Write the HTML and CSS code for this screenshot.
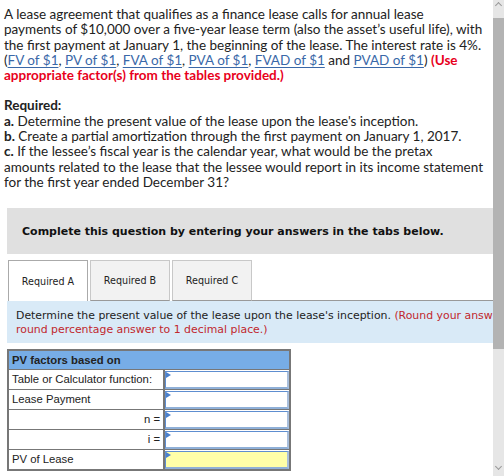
FILE: index.html
```html
<!DOCTYPE html>
<html lang="en">

<head>
  <meta charset="UTF-8" />
  <meta name="viewport" content="width=device-width, initial-scale=1.0" />
  <title>Lease question</title>
  <link rel="stylesheet" href="styles.css">
</head>

<body>
  <div class="page">
    <div class="main">
      <div class="question">
        <p>
          A lease agreement that qualifies as a finance lease calls for annual lease<br>
          payments of $10,000 over a five-year lease term (also the asset’s useful life), with<br>
          the first payment at January 1, the beginning of the lease. The interest rate is 4%.<br>
          (<a href="#">FV of $1</a>, <a href="#">PV of $1</a>, <a href="#">FVA of $1</a>, <a href="#">PVA of $1</a>, <a href="#">FVAD of $1</a> and <a href="#">PVAD of $1</a>) <b class="warn">(Use<br>
          appropriate factor(s) from the tables provided.)</b>
        </p>
        <p class="required">
          <b>Required:</b><br>
          <b>a.</b> Determine the present value of the lease upon the lease's inception.<br>
          <b>b.</b> Create a partial amortization through the first payment on January 1, 2017.<br>
          <b>c.</b> If the lessee’s fiscal year is the calendar year, what would be the pretax<br>
          amounts related to the lease that the lessee would report in its income statement<br>
          for the first year ended December 31?
        </p>
      </div>

      <div class="notice">Complete this question by entering your answers in the tabs below.</div>

      <div class="tabs">
        <div class="tab active">Required A</div>
        <div class="tab">Required B</div>
        <div class="tab">Required C</div>
        <div class="tab-rest"></div>
      </div>

      <div class="instructions">
        Determine the present value of the lease upon the lease's inception. <span class="red">(Round your answers and</span><br>
        <span class="red">round percentage answer to 1 decimal place.)</span>
      </div>

      <table class="pv">
        <tr>
          <th colspan="2">PV factors based on</th>
        </tr>
        <tr>
          <td class="label">Table or Calculator function:</td>
          <td class="cell"><div class="input"></div></td>
        </tr>
        <tr>
          <td class="label">Lease Payment</td>
          <td class="cell"><div class="input"></div></td>
        </tr>
        <tr>
          <td class="label right">n =</td>
          <td class="cell"><div class="input"></div></td>
        </tr>
        <tr>
          <td class="label right">i =</td>
          <td class="cell"><div class="input"></div></td>
        </tr>
        <tr>
          <td class="label">PV of Lease</td>
          <td class="cell"><div class="input total"></div></td>
        </tr>
      </table>
    </div>

    <div class="scrollbar">
      <div class="arrow up"></div>
      <div class="thumb"></div>
      <div class="track"></div>
      <div class="arrow down"></div>
    </div>
  </div>
</body>

</html>
```

FILE: styles.css
```css
* {
  box-sizing: border-box;
}

body {
  margin: 0;
  background: #fff;
}

.page {
  display: flex;
  width: 504px;
  height: 476px;
  overflow: hidden;
}

.main {
  flex: 1;
  min-width: 0;
  overflow: hidden;
}

.question {
  padding: 7px 0 0 4px;
  font-family: Lato, "Open Sans", sans-serif;
  font-size: 13.5px;
  line-height: 15.3px;
  color: #222;
  white-space: nowrap;
}

.question p {
  margin: 0;
}

.question a {
  color: #3a68a8;
  text-decoration: underline;
  text-underline-offset: 2px;
}

.question .warn {
  color: #e8001c;
}

.question .required {
  margin-top: 15px;
}

.notice {
  margin: 18px 0 0 7px;
  height: 46px;
  padding: 0 0 0 15px;
  background: #e0e0e0;
  display: flex;
  align-items: center;
  font-family: "DejaVu Sans", Verdana, sans-serif;
  font-weight: bold;
  font-size: 11px;
  color: #111;
}

.tabs {
  display: flex;
  margin: 6px 0 0 8px;
  height: 41px;
}

.tab {
  width: 80px;
  height: 41px;
  margin-right: 2px;
  border: 1px solid #c8c8c8;
  border-bottom: 1px solid #999;
  background: #f2f2f2;
  display: flex;
  align-items: center;
  justify-content: center;
  font-family: "DejaVu Sans", Verdana, sans-serif;
  font-size: 9.6px;
  color: #222;
}

.tab.active {
  background: #fff;
  border-color: #aaa;
  border-bottom: none;
}

.tab-rest {
  flex: 1;
  border-bottom: 1px solid #999;
  margin-left: -2px;
}

.instructions {
  margin-left: 7px;
  padding: 8px 0 6px 9px;
  background: #d9eaf7;
  font-family: "DejaVu Sans", Verdana, sans-serif;
  font-size: 10.9px;
  line-height: 14px;
  color: #222;
  white-space: nowrap;
}

.instructions .red {
  color: #c1272d;
}

.pv {
  margin: 6px 0 0 7px;
  width: 284px;
  border-collapse: collapse;
  border: 2px solid #777;
  font-family: "Liberation Sans", Arial, sans-serif;
  font-size: 11.3px;
  color: #222;
}

.pv th {
  height: 19px;
  padding: 0 0 0 3px;
  background: #77ade6;
  text-align: left;
  font-weight: bold;
  border-bottom: 1px solid #777;
}

.pv td {
  height: 19.5px;
  padding: 0;
  border-bottom: 1px solid #777;
}

.pv .label {
  width: 156px;
  padding: 0 3px 0 3px;
  border-right: 2px solid #777;
}

.pv .label.right {
  text-align: right;
}

.pv .cell {
  padding: 0;
}

.input {
  position: relative;
  height: 18px;
  margin: 1px 0 0 0;
  border: 1px solid #5e8ed0;
  border-bottom: 2px solid #8fb0d8;
  border-right: 2px solid #a9bfdc;
  background: #fff;
}

.input::before {
  content: "";
  position: absolute;
  left: 0;
  top: 0;
  border-left: 5px solid #4a80cc;
  border-top: 3px solid transparent;
  border-bottom: 3px solid transparent;
}

.input.total {
  background: #ffffa8;
}

.scrollbar {
  width: 11px;
  display: flex;
  flex-direction: column;
  background: #e6e6e6;
}

.scrollbar .arrow {
  height: 18px;
  position: relative;
}

.scrollbar .arrow::before {
  content: "";
  position: absolute;
  left: 3px;
  width: 4px;
  height: 4px;
  border-left: 1px solid #999;
  border-top: 1px solid #999;
}

.scrollbar .up::before {
  top: 3px;
  transform: rotate(45deg);
}

.scrollbar .down {
  margin-top: auto;
}

.scrollbar .down::before {
  top: 6px;
  transform: rotate(225deg);
}

.scrollbar .thumb {
  height: 331px;
  background: #b3b3b3;
}
```
